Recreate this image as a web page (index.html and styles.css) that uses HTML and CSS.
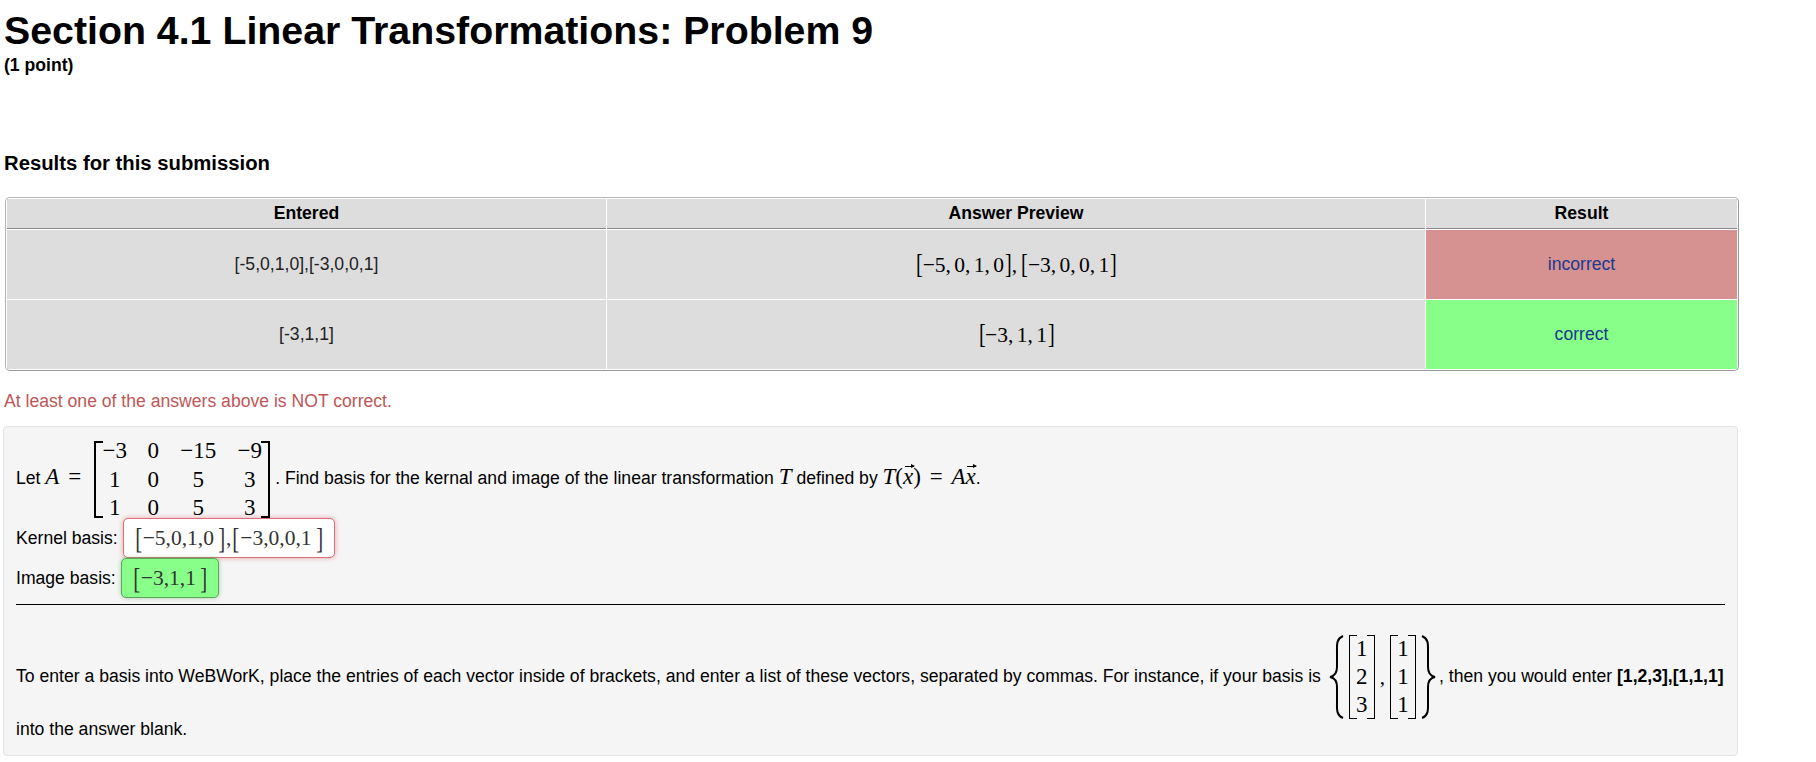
FILE: index.html
```html
<!DOCTYPE html>
<html lang="en">
<head>
<meta charset="UTF-8">
<title>Section 4.1 Linear Transformations: Problem 9</title>
<link rel="stylesheet" href="styles.css">
</head>
<body>

<h1>Section 4.1 Linear Transformations: Problem 9</h1>
<div class="points">(1 point)</div>

<h2>Results for this submission</h2>

<div class="results">
  <table>
    <tr class="head">
      <th class="col-entered">Entered</th>
      <th class="col-preview">Answer Preview</th>
      <th class="col-result">Result</th>
    </tr>
    <tr>
      <td>[-5,0,1,0],[-3,0,0,1]</td>
      <td class="math preview"><span class="tall">[</span>−5, 0, 1, 0<span class="tall">]</span>, <span class="tall">[</span>−3, 0, 0, 1<span class="tall">]</span></td>
      <td class="bad">incorrect</td>
    </tr>
    <tr>
      <td>[-3,1,1]</td>
      <td class="math preview"><span class="tall">[</span>−3, 1, 1<span class="tall">]</span></td>
      <td class="good">correct</td>
    </tr>
  </table>
</div>

<p class="warning">At least one of the answers above is NOT correct.</p>

<div class="problem">
  <div class="line-a">
    <span class="let">Let <span class="math"><i>A</i> =</span></span>
    <span class="matrix m-big">
      <span class="cell">−3</span><span class="cell">0</span><span class="cell">−15</span><span class="cell">−9</span>
      <span class="cell">1</span><span class="cell">0</span><span class="cell">5</span><span class="cell">3</span>
      <span class="cell">1</span><span class="cell">0</span><span class="cell">5</span><span class="cell">3</span>
    </span>
    <span class="after-matrix">. Find basis for the kernal and image of the linear transformation <span class="math"><i>T</i></span> defined by <span class="math"><i>T</i>(<span class="vec"><i>x</i></span>) = <i>A</i><span class="vec"><i>x</i></span></span>.</span>
  </div>

  <div class="answer">
    <span class="answer-label">Kernel basis:</span>
    <span class="field field-bad math"><span class="br">[</span>−5,0,1,0<span class="br br-end">]</span>,<span class="br">[</span>−3,0,0,1<span class="br br-end">]</span></span>
  </div>
  <div class="answer">
    <span class="answer-label">Image basis:</span>
    <span class="field field-good math"><span class="br">[</span>−3,1,1<span class="br br-end">]</span></span>
  </div>

  <hr>

  <p class="hint">To enter a basis into WeBWorK, place the entries of each vector inside of brackets, and enter a list of these vectors, separated by commas. For instance, if your basis is
    <span class="basis math">
      <svg class="brace" viewBox="0 0 20 84" width="20" height="84"><path d="M16 1C9 4 10 10 10 18V32C10 38 8 41 3 42C8 43 10 46 10 52V66C10 74 9 80 16 83" fill="none" stroke="#000" stroke-width="2"/></svg>
      <span class="matrix m-col"><span class="cell">1</span><span class="cell">2</span><span class="cell">3</span></span>
      <span class="comma">,</span>
      <span class="matrix m-col"><span class="cell">1</span><span class="cell">1</span><span class="cell">1</span></span>
      <svg class="brace" viewBox="0 0 20 84" width="20" height="84"><path d="M4 1C11 4 10 10 10 18V32C10 38 12 41 17 42C12 43 10 46 10 52V66C10 74 11 80 4 83" fill="none" stroke="#000" stroke-width="2"/></svg>
    </span>, then you would enter <b>[1,2,3],[1,1,1]</b> into the answer blank.</p>
</div>

</body>
</html>
```

FILE: styles.css
```css
body { margin: 0; padding: 0 4px; font-family: "Liberation Sans", Arial, sans-serif; font-size: 17.6px; color: #000; background: #fff; }
h1 { font-size: 39.3px; line-height: 42px; margin: 9px 0 0; font-weight: bold; }
.points { font-size: 17.6px; font-weight: bold; line-height: 20px; margin-top: 4px; }
h2 { font-size: 20.3px; font-weight: bold; line-height: 24px; margin: 76px 0 0; }

.results { width: 1734px; margin: 22px 0 0 1px; border: 1px solid #b5b5b5; border-right-color: #999; border-bottom-color: #999; border-radius: 5px; overflow: hidden; box-sizing: border-box; }
table { width: 100%; border-collapse: separate; border-spacing: 1px; table-layout: fixed; }
th, td { background: #ddd; text-align: center; padding: 0; }
.head th { height: 29px; border-bottom: 1px solid #888; font-size: 17.6px; }
td { height: 69px; font-size: 17.6px; color: #222; }
.col-entered { width: 599px; }
.col-preview { width: 818px; }
td.bad { background: #d69191; color: #1a3a8e; }
td.good { background: #8f8; color: #1a3a8e; }

.math { font-family: "Liberation Serif", "DejaVu Serif", serif; }
.preview { font-size: 21.5px; color: #000; word-spacing: -2px; }
.tall { font-size: 27px; font-weight: normal; display: inline-block; width: 7.5px; text-align: center; transform: scaleX(0.75); vertical-align: -1px; line-height: 1; }

.warning { color: #c05656; margin: 18px 0 0; line-height: 24px; }

.problem { width: 1735px; box-sizing: border-box; margin: 13px 0 0 -1px; padding: 14px 12px 16px; background: #f5f5f5; border: 1px solid #e3e3e3; border-radius: 4px; }
.line-a { display: flex; align-items: center; height: 77px; }
.let { white-space: pre; padding-bottom: 5px; }
.line-a .math { font-size: 23px; word-spacing: 3px; }
.after-matrix { margin-left: 5px; padding-bottom: 5px; }

.matrix { display: inline-grid; position: relative; align-items: center; justify-items: center; align-content: center; font-family: "Liberation Serif", "DejaVu Serif", serif; font-size: 23px; }
.matrix::before, .matrix::after { content: ""; position: absolute; top: 0; bottom: 0; width: 7px; border: 2px solid #000; }
.matrix::before { left: 0; border-right: none; }
.matrix::after { right: 0; border-left: none; }
.m-big { grid-template-columns: 25px 12px 38px 25px; column-gap: 20px; grid-auto-rows: 28.5px; padding: 0 8px; margin-left: 13px; height: 77px; }
.m-col { grid-template-columns: 20px; grid-auto-rows: 28px; padding: 0 3px; height: 84px; }
.m-col::before, .m-col::after { border-width: 1.5px; }

.answer { display: flex; align-items: center; height: 40px; }
.answer-label { margin-right: 5px; }
.field { display: inline-flex; align-items: center; box-sizing: border-box; height: 40px; padding: 0 10px; border-radius: 5px; font-size: 21.5px; color: #333; }
.field-bad { background: #fff; border: 1px solid #d9707a; box-shadow: 0 0 5px rgba(217, 83, 79, 0.5); }
.field-good { background: #8f8; border: 1px solid #5aa65a; box-shadow: 0 0 4px rgba(80, 160, 80, 0.5); }
.br { display: inline-block; width: 9px; text-align: center; font-size: 30px; line-height: 1; transform: scaleX(0.7); }
.br-end { margin-left: 3px; }

hr { border: none; border-top: 1px solid #000; margin: 6px 0 0; }

.hint { margin: 30px -8px 0 0; line-height: 20px; }
.basis { display: inline-flex; align-items: center; vertical-align: middle; gap: 2px; font-size: 21px; margin: 0 1px; }
.comma { align-self: center; padding: 0 3px; }

.vec { position: relative; display: inline-block; }
.vec::before { content: ""; position: absolute; top: 2px; left: 2px; width: 9px; height: 1px; background: #000; }
.vec::after { content: ""; position: absolute; top: 0; left: 8px; border-left: 4px solid #000; border-top: 2.5px solid transparent; border-bottom: 2.5px solid transparent; }
```
